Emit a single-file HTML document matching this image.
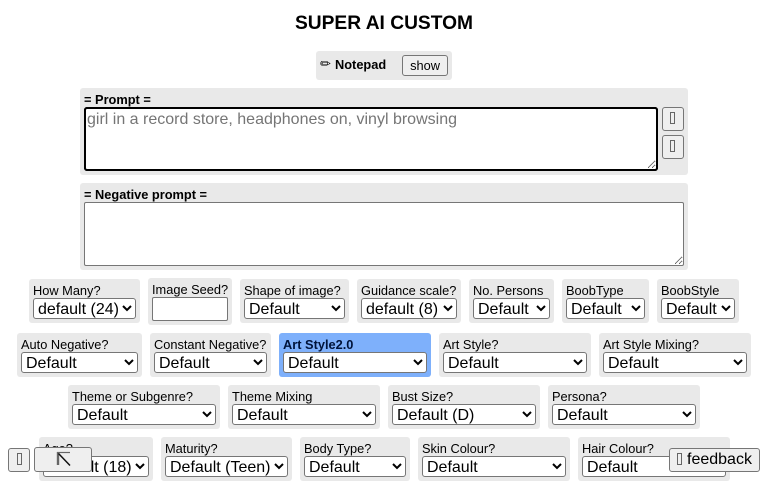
<!DOCTYPE html>
<html lang="en"><head><meta charset="utf-8"><title>SUPER AI CUSTOM</title>
<style>
html,body{margin:0;padding:0;width:768px;height:480px;overflow:hidden;background:#fff;color:#000;font-family:"Liberation Sans",sans-serif;font-size:12.8px}
.a{position:absolute;box-sizing:border-box}
.b{position:absolute;box-sizing:border-box;background:#e9e9e9;border-radius:3px}
.l{position:absolute;white-space:nowrap;font-size:12.8px;line-height:15px}
.t{position:absolute;box-sizing:border-box;border:1px solid #666;width:5px;height:12px;z-index:3}
select{position:absolute;box-sizing:border-box;height:21px;font:16px "Liberation Sans",sans-serif;background:#fff;color:#000;border:1px solid #767676;border-radius:3px;padding:1px 0 0;margin:0}
input,textarea{position:absolute;box-sizing:border-box;margin:0;background:#fff;border:1px solid #767676;border-radius:2px}
textarea{font:16px "Liberation Sans",sans-serif;padding:2px}
textarea::placeholder{color:#757575}
button{position:absolute;box-sizing:border-box;margin:0;padding:0;background:#efefef;border:1px solid #767676;border-radius:3px;color:#000;font-family:"Liberation Sans",sans-serif;white-space:nowrap}
</style></head><body>
<div class="a" style="left:0;top:13px;width:768px;text-align:center;font-weight:bold;font-size:19.2px;line-height:22px">SUPER AI CUSTOM</div>

<div class="b" style="left:316px;top:51px;width:136px;height:29px"></div>
<div class="l" style="left:320px;top:57px;font-weight:normal;font-family:'DejaVu Sans',sans-serif">✏</div>
<div class="l" style="left:335px;top:57px;font-weight:bold">Notepad</div>
<button style="left:402px;top:55px;width:46px;height:21px;font-size:12.8px">show</button>

<div class="b" style="left:80px;top:88px;width:608px;height:87px"></div>
<div class="l" style="left:84px;top:92px;font-weight:bold">= Prompt =</div>
<textarea placeholder="girl in a record store, headphones on, vinyl browsing" style="left:84px;top:107px;width:574px;height:64px;border:2px solid #000;outline:1px solid #000;outline-offset:-1px;border-radius:3px;padding:2px 1px"></textarea>
<button style="left:662px;top:107px;width:22px;height:24px"></button><div class="t" style="left:670px;top:112px"></div>
<button style="left:662px;top:135px;width:22px;height:24px"></button><div class="t" style="left:670px;top:140px"></div>

<div class="b" style="left:80px;top:183px;width:608px;height:87px"></div>
<div class="l" style="left:84px;top:187px;font-weight:bold">= Negative prompt =</div>
<textarea style="left:84px;top:202px;width:600px;height:64px"></textarea>

<!-- row 1 -->
<div class="b" style="left:29px;top:279px;width:111px;height:44px"></div><div class="l" style="left:33px;top:283px">How Many?</div><select style="left:33px;top:298px;width:103px"><option>default (24)</option></select>
<div class="b" style="left:148px;top:278px;width:84px;height:47px"></div><div class="l" style="left:152px;top:282px">Image Seed?</div><input style="left:152px;top:297px;width:76px;height:24px">
<div class="b" style="left:240px;top:279px;width:109px;height:44px"></div><div class="l" style="left:244px;top:283px">Shape of image?</div><select style="left:244px;top:298px;width:101px"><option>Default</option></select>
<div class="b" style="left:357px;top:279px;width:104px;height:44px"></div><div class="l" style="left:361px;top:283px">Guidance scale?</div><select style="left:361px;top:298px;width:96px"><option>default (8)</option></select>
<div class="b" style="left:469px;top:279px;width:85px;height:44px"></div><div class="l" style="left:473px;top:283px">No. Persons</div><select style="left:473px;top:298px;width:77px"><option>Default</option></select>
<div class="b" style="left:562px;top:279px;width:87px;height:44px"></div><div class="l" style="left:566px;top:283px">BoobType</div><select style="left:566px;top:298px;width:79px"><option>Default</option></select>
<div class="b" style="left:657px;top:279px;width:82px;height:44px"></div><div class="l" style="left:661px;top:283px">BoobStyle</div><select style="left:661px;top:298px;width:74px"><option>Default</option></select>

<!-- row 2 -->
<div class="b" style="left:17px;top:333px;width:125px;height:44px"></div><div class="l" style="left:21px;top:337px">Auto Negative?</div><select style="left:21px;top:352px;width:117px"><option>Default</option></select>
<div class="b" style="left:150px;top:333px;width:121px;height:44px"></div><div class="l" style="left:154px;top:337px">Constant Negative?</div><select style="left:154px;top:352px;width:113px"><option>Default</option></select>
<div class="b" style="left:279px;top:333px;width:152px;height:44px;background:#7eb0fb"></div><div class="l" style="left:283px;top:337px;font-weight:bold;color:#00133a">Art Style2.0</div><select style="left:283px;top:352px;width:144px"><option>Default</option></select>
<div class="b" style="left:439px;top:333px;width:152px;height:44px"></div><div class="l" style="left:443px;top:337px">Art Style?</div><select style="left:443px;top:352px;width:144px"><option>Default</option></select>
<div class="b" style="left:599px;top:333px;width:152px;height:44px"></div><div class="l" style="left:603px;top:337px">Art Style Mixing?</div><select style="left:603px;top:352px;width:144px"><option>Default</option></select>

<!-- row 3 -->
<div class="b" style="left:68px;top:385px;width:152px;height:44px"></div><div class="l" style="left:72px;top:389px">Theme or Subgenre?</div><select style="left:72px;top:404px;width:144px"><option>Default</option></select>
<div class="b" style="left:228px;top:385px;width:152px;height:44px"></div><div class="l" style="left:232px;top:389px">Theme Mixing</div><select style="left:232px;top:404px;width:144px"><option>Default</option></select>
<div class="b" style="left:388px;top:385px;width:152px;height:44px"></div><div class="l" style="left:392px;top:389px">Bust Size?</div><select style="left:392px;top:404px;width:144px"><option>Default (D)</option></select>
<div class="b" style="left:548px;top:385px;width:152px;height:44px"></div><div class="l" style="left:552px;top:389px">Persona?</div><select style="left:552px;top:404px;width:144px"><option>Default</option></select>

<!-- row 4 -->
<div class="b" style="left:39px;top:437px;width:114px;height:44px"></div><div class="l" style="left:43px;top:441px">Age?</div><select style="left:43px;top:456px;width:106px"><option>Default (18)</option></select>
<div class="b" style="left:161px;top:437px;width:131px;height:44px"></div><div class="l" style="left:165px;top:441px">Maturity?</div><select style="left:165px;top:456px;width:123px"><option>Default (Teen)</option></select>
<div class="b" style="left:300px;top:437px;width:110px;height:44px"></div><div class="l" style="left:304px;top:441px">Body Type?</div><select style="left:304px;top:456px;width:102px"><option>Default</option></select>
<div class="b" style="left:418px;top:437px;width:152px;height:44px"></div><div class="l" style="left:422px;top:441px">Skin Colour?</div><select style="left:422px;top:456px;width:144px"><option>Default</option></select>
<div class="b" style="left:578px;top:437px;width:152px;height:44px"></div><div class="l" style="left:582px;top:441px">Hair Colour?</div><select style="left:582px;top:456px;width:144px"><option>Default</option></select>

<!-- fixed -->
<button style="left:8px;top:448px;width:22px;height:24px"></button><div class="t" style="left:17px;top:453px"></div>
<button style="left:34px;top:447px;width:58px;height:25px"></button>
<svg class="a" style="left:34px;top:447px;z-index:3" width="58" height="25" viewBox="0 0 58 25" fill="none"><path d="M23 5.5H36" stroke="#666" stroke-width="1.2"/><path d="M24 5V18" stroke="#666" stroke-width="2.4"/><path d="M24.5 6.5L36 18.5" stroke="#111" stroke-width="1.5"/></svg>
<button style="left:669px;top:448px;width:91px;height:24px;font-size:16px;text-align:left;padding-left:17px">feedback</button><div class="t" style="left:677px;top:453px"></div>
</body></html>
